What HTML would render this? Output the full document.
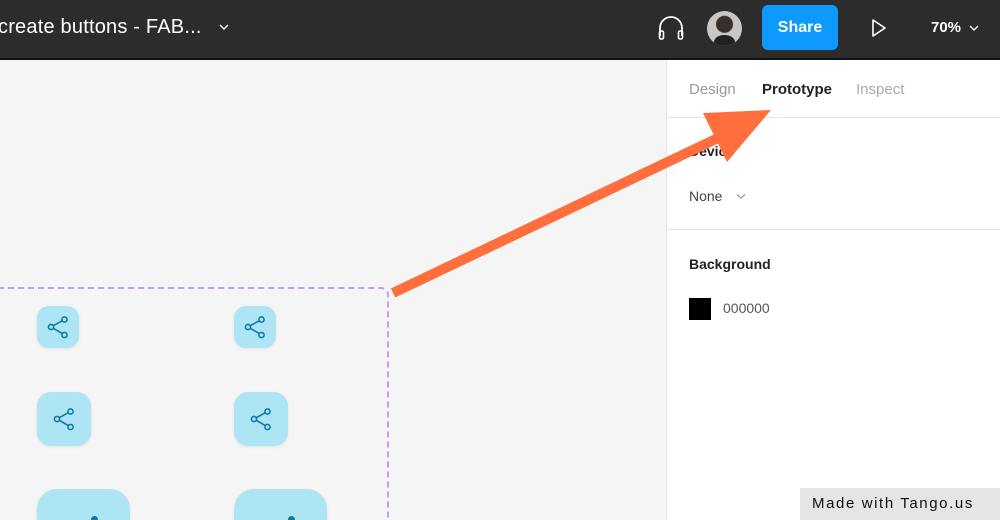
<!DOCTYPE html>
<html style="width:1000px;height:520px;overflow:hidden"><head><style>
*{margin:0;padding:0;box-sizing:border-box}
body{width:1000px;height:520px;overflow:hidden;position:relative;background:#f5f5f5;font-family:"Liberation Sans",sans-serif}
#w{position:absolute;left:0;top:0;width:1000px;height:520px;overflow:hidden}
.top{position:absolute;left:0;top:0;width:1000px;height:60px;background:#2c2c2c;border-bottom:2px solid #111}
.abs{position:absolute}
.panel{position:absolute;left:666px;top:60px;width:334px;height:460px;background:#fff;border-left:1px solid #e5e5e5}
.fab{position:absolute;background:#aee5f5;border-radius:12px;box-shadow:0 1px 3px rgba(0,0,0,.08);overflow:hidden}
.fab svg{position:absolute;left:50%;top:50%;transform:translate(-50%,-50%)}
</style></head><body><div id="w">
<div class="top">
 <div class="abs" style="left:-2px;top:16px;color:#fff;font-size:20px;letter-spacing:0.2px">create buttons - FAB...</div>
 <svg class="abs" style="left:219px;top:23px" width="10" height="8"><path d="M1 2l4 4 4-4" stroke="#fff" fill="none" stroke-width="1.4"/></svg>
 <svg class="abs" style="left:656px;top:14px" width="30" height="28"><path d="M4 22V14a11 11 0 0 1 22 0v8" stroke="#fff" fill="none" stroke-width="1.8"/><rect x="3.5" y="17" width="4" height="8" rx="1.5" stroke="#fff" fill="none" stroke-width="1.6"/><rect x="22.5" y="17" width="4" height="8" rx="1.5" stroke="#fff" fill="none" stroke-width="1.6"/></svg>
 <div class="abs" style="left:707px;top:11px;width:35px;height:35px;border-radius:50%;background:radial-gradient(circle at 50% 38%,#3a2e2a 0 8px,#c9c6c6 9px);overflow:hidden"><div style="position:absolute;left:7px;top:24px;width:21px;height:14px;border-radius:50% 50% 0 0;background:#222"></div></div>
 <div class="abs" style="left:762px;top:5px;width:76px;height:45px;background:#0d99ff;border-radius:6px;color:#fff;font-weight:bold;font-size:16px;text-align:center;line-height:45px">Share</div>
 <svg class="abs" style="left:870px;top:18px" width="18" height="20"><path d="M3 2l12 8-12 8z" stroke="#fff" fill="none" stroke-width="1.6" stroke-linejoin="round"/></svg>
 <div class="abs" style="left:931px;top:19px;color:#fff;font-size:15px;font-weight:bold">70%</div>
 <svg class="abs" style="left:969px;top:24px" width="10" height="8"><path d="M1 2l4 4 4-4" stroke="#fff" fill="none" stroke-width="1.4"/></svg>
</div>
<div class="panel">
 <div class="abs" style="left:22px;top:21px;font-size:15px;color:#999">Design</div>
 <div class="abs" style="left:95px;top:21px;font-size:15px;color:#222;font-weight:bold">Prototype</div>
 <div class="abs" style="left:189px;top:21px;font-size:15px;color:#aaa">Inspect</div>
 <div class="abs" style="left:0;top:57px;width:334px;height:1px;background:#e6e6e6"></div>
 <div class="abs" style="left:22px;top:83px;font-size:14px;color:#222;font-weight:bold">Device</div>
 <div class="abs" style="left:22px;top:128px;font-size:14px;color:#444">None</div>
 <svg class="abs" style="left:69px;top:133px" width="10" height="7"><path d="M1 1.5l4 3.5 4-3.5" stroke="#999" fill="none" stroke-width="1.2"/></svg>
 <div class="abs" style="left:0;top:169px;width:334px;height:1px;background:#e6e6e6"></div>
 <div class="abs" style="left:22px;top:196px;font-size:14px;color:#222;font-weight:bold">Background</div>
 <div class="abs" style="left:22px;top:238px;width:22px;height:22px;background:#000"></div>
 <div class="abs" style="left:56px;top:240px;font-size:14px;color:#555">000000</div>
</div>
<div class="abs" style="left:-10px;top:287px;width:399px;height:233px;border:2px dashed #c29ef7;border-bottom:none;border-radius:8px 8px 0 0"></div>
<div class="fab" style="left:37px;top:306px;width:42px;height:42px"><svg width="26" height="26" viewBox="0 0 26 26"><g stroke="#0e7aa6" stroke-width="1.6" fill="none"><circle cx="6" cy="13" r="2.6"/><circle cx="19.5" cy="5.5" r="2.6"/><circle cx="19.5" cy="21" r="2.6"/><path d="M8.3 11.7l9-5M8.3 14.3l9 5.3"/></g></svg></div>
<div class="fab" style="left:234px;top:306px;width:42px;height:42px"><svg width="26" height="26" viewBox="0 0 26 26"><g stroke="#0e7aa6" stroke-width="1.6" fill="none"><circle cx="6" cy="13" r="2.6"/><circle cx="19.5" cy="5.5" r="2.6"/><circle cx="19.5" cy="21" r="2.6"/><path d="M8.3 11.7l9-5M8.3 14.3l9 5.3"/></g></svg></div>
<div class="fab" style="left:37px;top:392px;width:54px;height:54px;border-radius:14px"><svg width="26" height="26" viewBox="0 0 26 26"><g stroke="#0e7aa6" stroke-width="1.6" fill="none"><circle cx="6" cy="13" r="2.6"/><circle cx="19.5" cy="5.5" r="2.6"/><circle cx="19.5" cy="21" r="2.6"/><path d="M8.3 11.7l9-5M8.3 14.3l9 5.3"/></g></svg></div>
<div class="fab" style="left:234px;top:392px;width:54px;height:54px;border-radius:14px"><svg width="26" height="26" viewBox="0 0 26 26"><g stroke="#0e7aa6" stroke-width="1.6" fill="none"><circle cx="6" cy="13" r="2.6"/><circle cx="19.5" cy="5.5" r="2.6"/><circle cx="19.5" cy="21" r="2.6"/><path d="M8.3 11.7l9-5M8.3 14.3l9 5.3"/></g></svg></div>
<div class="fab" style="left:37px;top:489px;width:93px;height:31px;border-radius:20px 20px 0 0"><div style="position:absolute;left:54px;top:27px;width:7px;height:4px;border-radius:4px 4px 0 0;background:#0e7aa6"></div></div>
<div class="fab" style="left:234px;top:489px;width:93px;height:31px;border-radius:20px 20px 0 0"><div style="position:absolute;left:54px;top:27px;width:7px;height:4px;border-radius:4px 4px 0 0;background:#0e7aa6"></div></div>
<svg class="abs" style="left:0;top:0" width="1000" height="520"><path d="M393 293L718 138" stroke="#ff6e3c" stroke-width="10"/><polygon points="771,110 703,113 727,162" fill="#ff6e3c"/></svg>
<div class="abs" style="left:800px;top:488px;width:200px;height:32px;background:#e5e5e5;color:#111;font-size:15px;letter-spacing:1.6px;line-height:32px;padding-left:12px">Made with Tango.us</div>
</div></body></html>
